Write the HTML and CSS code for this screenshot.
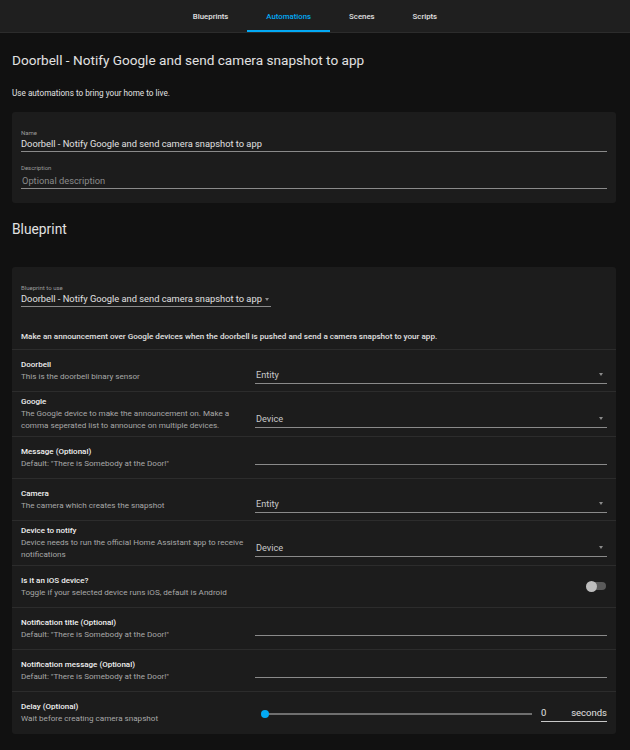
FILE: index.html
```html
<!DOCTYPE html>
<html>

<head>
  <title>Automation Editor</title>
  <link rel="stylesheet" href="styles.css">
</head>

<body>
  <header class="toolbar">
    <nav class="tabs">
      <a class="tab">Blueprints</a>
      <a class="tab active">Automations</a>
      <a class="tab">Scenes</a>
      <a class="tab">Scripts</a>
    </nav>
  </header>

  <main class="content">
    <h1 class="page-title">Doorbell - Notify Google and send camera snapshot to app</h1>
    <p class="intro">Use automations to bring your home to live.</p>

    <section class="card card-info">
      <div class="field">
        <span class="field-label">Name</span>
        <div class="field-input">Doorbell - Notify Google and send camera snapshot to app</div>
      </div>
      <div class="field">
        <span class="field-label">Description</span>
        <div class="field-input placeholder">Optional description</div>
      </div>
    </section>

    <h2 class="section-title">Blueprint</h2>

    <section class="card card-blueprint">
      <div class="blueprint-head">
        <div class="field field-select">
          <span class="field-label">Blueprint to use</span>
          <div class="field-input">Doorbell - Notify Google and send camera snapshot to app <span class="arrow"></span></div>
        </div>
        <p class="blueprint-desc">Make an announcement over Google devices when the doorbell is pushed and send a camera snapshot to your app.</p>
      </div>

      <div class="setting-row">
        <div class="setting-text">
          <div class="setting-name">Doorbell</div>
          <div class="setting-desc">This is the doorbell binary sensor</div>
        </div>
        <div class="setting-control">
          <div class="picker">Entity <span class="arrow"></span></div>
        </div>
      </div>

      <div class="setting-row">
        <div class="setting-text">
          <div class="setting-name">Google</div>
          <div class="setting-desc">The Google device to make the announcement on. Make a comma seperated list to announce on multiple devices.</div>
        </div>
        <div class="setting-control">
          <div class="picker">Device <span class="arrow"></span></div>
        </div>
      </div>

      <div class="setting-row">
        <div class="setting-text">
          <div class="setting-name">Message (Optional)</div>
          <div class="setting-desc">Default: "There is Somebody at the Door!"</div>
        </div>
        <div class="setting-control">
          <div class="text-input"></div>
        </div>
      </div>

      <div class="setting-row">
        <div class="setting-text">
          <div class="setting-name">Camera</div>
          <div class="setting-desc">The camera which creates the snapshot</div>
        </div>
        <div class="setting-control">
          <div class="picker">Entity <span class="arrow"></span></div>
        </div>
      </div>

      <div class="setting-row">
        <div class="setting-text">
          <div class="setting-name">Device to notify</div>
          <div class="setting-desc">Device needs to run the official Home Assistant app to receive notifications</div>
        </div>
        <div class="setting-control">
          <div class="picker">Device <span class="arrow"></span></div>
        </div>
      </div>

      <div class="setting-row">
        <div class="setting-text">
          <div class="setting-name">Is it an iOS device?</div>
          <div class="setting-desc">Toggle if your selected device runs iOS, default is Android</div>
        </div>
        <div class="setting-control control-end">
          <div class="toggle"><span class="knob"></span></div>
        </div>
      </div>

      <div class="setting-row">
        <div class="setting-text">
          <div class="setting-name">Notification title (Optional)</div>
          <div class="setting-desc">Default: "There is Somebody at the Door!"</div>
        </div>
        <div class="setting-control">
          <div class="text-input"></div>
        </div>
      </div>

      <div class="setting-row">
        <div class="setting-text">
          <div class="setting-name">Notification message (Optional)</div>
          <div class="setting-desc">Default: "There is Somebody at the Door!"</div>
        </div>
        <div class="setting-control">
          <div class="text-input"></div>
        </div>
      </div>

      <div class="setting-row">
        <div class="setting-text">
          <div class="setting-name">Delay (Optional)</div>
          <div class="setting-desc">Wait before creating camera snapshot</div>
        </div>
        <div class="setting-control slider-control">
          <div class="slider"><span class="slider-knob"></span></div>
          <div class="number-input"><span>0</span><span>seconds</span></div>
        </div>
      </div>
    </section>
  </main>
</body>

</html>
```

FILE: styles.css
```css
body {
  font-family: Roboto, "Liberation Sans", sans-serif;
  background-color: #111111;
  color: #e1e1e1;
  margin: 0;
  padding: 0;
}

.toolbar {
  background-color: #1f1f1f;
  border-bottom: 1px solid #2c2c2c;
  height: 32px;
}

.tabs {
  display: flex;
  justify-content: center;
  height: 100%;
}

.tab {
  padding: 2px 19px 0;
  font-size: 7.8px;
  font-weight: 500;
  color: #e1e1e1;
  display: flex;
  align-items: center;
  border-bottom: 2px solid transparent;
  box-sizing: border-box;
}

.tab.active {
  color: #03a9f4;
  border-bottom-color: #03a9f4;
}

.content {
  padding: 0 14px 15px 12px;
}

.page-title {
  font-size: 13.6px;
  font-weight: 400;
  margin: 0;
  padding-top: 18px;
  line-height: 18px;
}

.intro {
  font-size: 8.2px;
  margin: 19px 0 0;
  line-height: 10px;
}

.card {
  background-color: #1c1c1c;
  border-radius: 3px;
}

.card-info {
  margin-top: 14px;
  padding: 16px 9px 14px;
}

.field {
  display: flex;
  flex-direction: column;
}

.field + .field {
  margin-top: 11px;
}

.field-label {
  font-size: 6px;
  color: #9b9b9b;
  line-height: 9px;
}

.field-input {
  font-size: 9.3px;
  line-height: 13px;
  color: #e1e1e1;
  border-bottom: 1px solid #8a8a8a;
  padding-bottom: 1px;
}

.field-input.placeholder {
  color: #8a8a8a;
  padding-left: 1px;
  padding-top: 2px;
}

.section-title {
  font-size: 13.8px;
  font-weight: 400;
  margin: 17px 0 0;
  line-height: 18px;
}

.card-blueprint {
  margin-top: 29px;
}

.blueprint-head {
  padding: 16px 9px 8px;
  border-bottom: 1px solid #2c2c2c;
}

.field-select {
  align-items: flex-start;
}

.field-select .field-input {
  padding-right: 2px;
}

.blueprint-desc {
  font-size: 8.1px;
  font-weight: 500;
  margin: 24px 0 0;
  line-height: 10px;
}

.arrow {
  display: inline-block;
  width: 0;
  height: 0;
  border-left: 2.5px solid transparent;
  border-right: 2.5px solid transparent;
  border-top: 3px solid #8a8a8a;
  vertical-align: middle;
  margin-left: 1px;
}

.setting-row {
  display: flex;
  align-items: center;
  min-height: 42px;
  padding: 4px 9px 5px;
  border-bottom: 1px solid #2c2c2c;
  box-sizing: border-box;
}

.setting-row:last-child {
  border-bottom: none;
}

.setting-text {
  width: 234px;
  flex-shrink: 0;
}

.setting-name {
  font-size: 8px;
  font-weight: 500;
  color: #f0f0f0;
  line-height: 11px;
}

.setting-desc {
  font-size: 8.1px;
  color: #a8a8a8;
  line-height: 12px;
}

.setting-control {
  flex: 1;
}

.control-end {
  display: flex;
  justify-content: flex-end;
}

.picker {
  display: flex;
  justify-content: space-between;
  align-items: flex-end;
  font-size: 9.2px;
  line-height: 13px;
  color: #c8c8c8;
  border-bottom: 1px solid #8a8a8a;
  height: 28px;
  box-sizing: border-box;
  padding: 0 4px 2px 1px;
}

.picker .arrow {
  margin-bottom: 5px;
}

.text-input {
  border-bottom: 1px solid #8a8a8a;
  height: 15px;
}

.toggle {
  width: 16px;
  height: 8px;
  background-color: #5a5a5a;
  border-radius: 4px;
  display: flex;
  align-items: center;
  margin-right: 1px;
}

.knob {
  width: 11px;
  height: 11px;
  border-radius: 50%;
  background-color: #bdbdbd;
  margin-left: -4px;
}

.slider-control {
  display: flex;
  align-items: center;
}

.slider {
  flex: 1;
  height: 2px;
  background-color: #6f6f6f;
  display: flex;
  align-items: center;
  margin: 2px 9px 0 10px;
}

.slider-knob {
  width: 8px;
  height: 8px;
  border-radius: 50%;
  background-color: #03a9f4;
  margin-left: -4px;
}

.number-input {
  width: 66px;
  display: flex;
  justify-content: space-between;
  font-size: 9.5px;
  color: #e1e1e1;
  border-bottom: 1px solid #c8c8c8;
  padding: 2px 0 2px;
  line-height: 13px;
}
```
